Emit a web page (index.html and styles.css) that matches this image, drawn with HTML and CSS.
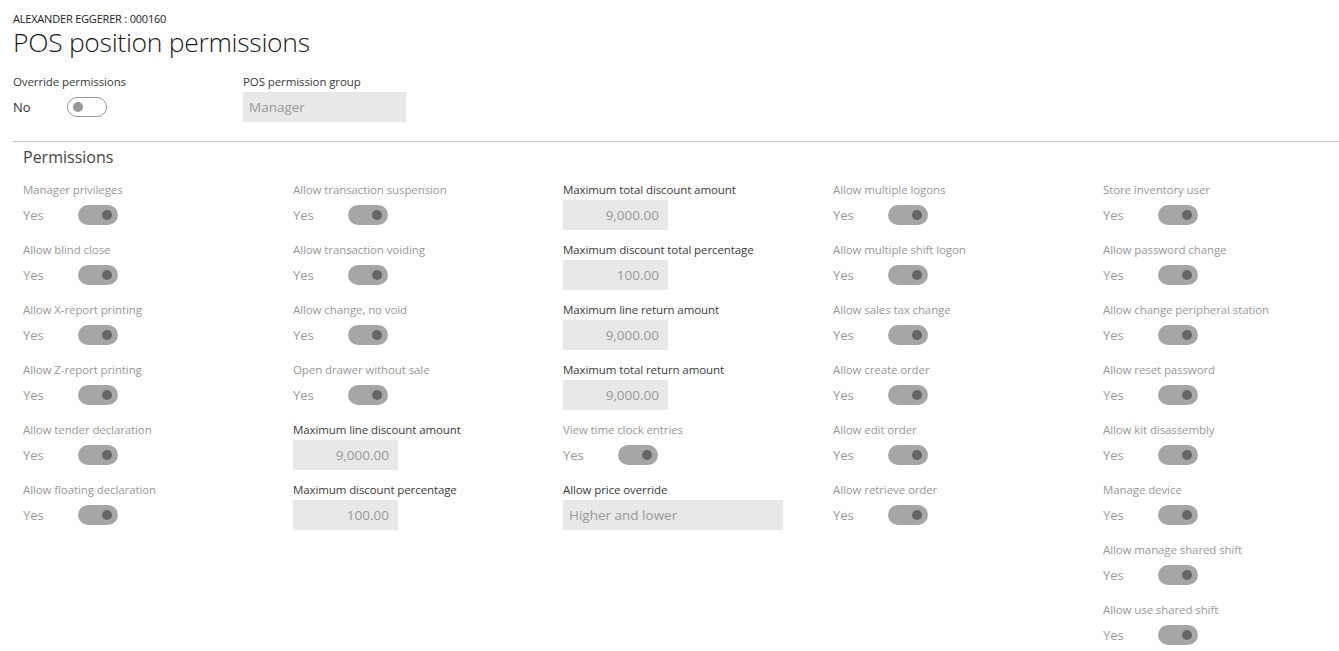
FILE: index.html
```html
<!DOCTYPE html>
<html>
<head>
<meta charset="utf-8">
<link rel="stylesheet" href="styles.css">
</head>
<body>
<div class="page">
  <div class="caption">ALEXANDER EGGERER : 000160</div>
  <h1 class="title">POS position permissions</h1>
  <div class="top-fields">
    <div class="top-field f-override">
      <div class="label dark">Override permissions</div>
      <div class="control">
        <span class="val dark">No</span>
        <span class="toggle off"><span class="knob"></span></span>
      </div>
    </div>
    <div class="top-field">
      <div class="label dark">POS permission group</div>
      <div class="control">
        <div class="input w163 left">Manager</div>
      </div>
    </div>
  </div>
  <div class="section">
    <div class="section-title">Permissions</div>
    <div class="grid">
      <div class="col">
        <div class="field"><div class="label">Manager privileges</div><div class="control"><span class="val">Yes</span><span class="toggle"><span class="knob"></span></span></div></div>
        <div class="field"><div class="label">Allow blind close</div><div class="control"><span class="val">Yes</span><span class="toggle"><span class="knob"></span></span></div></div>
        <div class="field"><div class="label">Allow X-report printing</div><div class="control"><span class="val">Yes</span><span class="toggle"><span class="knob"></span></span></div></div>
        <div class="field"><div class="label">Allow Z-report printing</div><div class="control"><span class="val">Yes</span><span class="toggle"><span class="knob"></span></span></div></div>
        <div class="field"><div class="label">Allow tender declaration</div><div class="control"><span class="val">Yes</span><span class="toggle"><span class="knob"></span></span></div></div>
        <div class="field"><div class="label">Allow floating declaration</div><div class="control"><span class="val">Yes</span><span class="toggle"><span class="knob"></span></span></div></div>
      </div>
      <div class="col">
        <div class="field"><div class="label">Allow transaction suspension</div><div class="control"><span class="val">Yes</span><span class="toggle"><span class="knob"></span></span></div></div>
        <div class="field"><div class="label">Allow transaction voiding</div><div class="control"><span class="val">Yes</span><span class="toggle"><span class="knob"></span></span></div></div>
        <div class="field"><div class="label">Allow change, no void</div><div class="control"><span class="val">Yes</span><span class="toggle"><span class="knob"></span></span></div></div>
        <div class="field"><div class="label">Open drawer without sale</div><div class="control"><span class="val">Yes</span><span class="toggle"><span class="knob"></span></span></div></div>
        <div class="field"><div class="label dark">Maximum line discount amount</div><div class="control"><div class="input num">9,000.00</div></div></div>
        <div class="field"><div class="label dark">Maximum discount percentage</div><div class="control"><div class="input num">100.00</div></div></div>
      </div>
      <div class="col">
        <div class="field"><div class="label dark">Maximum total discount amount</div><div class="control"><div class="input num">9,000.00</div></div></div>
        <div class="field"><div class="label dark">Maximum discount total percentage</div><div class="control"><div class="input num">100.00</div></div></div>
        <div class="field"><div class="label dark">Maximum line return amount</div><div class="control"><div class="input num">9,000.00</div></div></div>
        <div class="field"><div class="label dark">Maximum total return amount</div><div class="control"><div class="input num">9,000.00</div></div></div>
        <div class="field"><div class="label">View time clock entries</div><div class="control"><span class="val">Yes</span><span class="toggle"><span class="knob"></span></span></div></div>
        <div class="field"><div class="label dark">Allow price override</div><div class="control"><div class="input w220 left">Higher and lower</div></div></div>
      </div>
      <div class="col">
        <div class="field"><div class="label">Allow multiple logons</div><div class="control"><span class="val">Yes</span><span class="toggle"><span class="knob"></span></span></div></div>
        <div class="field"><div class="label">Allow multiple shift logon</div><div class="control"><span class="val">Yes</span><span class="toggle"><span class="knob"></span></span></div></div>
        <div class="field"><div class="label">Allow sales tax change</div><div class="control"><span class="val">Yes</span><span class="toggle"><span class="knob"></span></span></div></div>
        <div class="field"><div class="label">Allow create order</div><div class="control"><span class="val">Yes</span><span class="toggle"><span class="knob"></span></span></div></div>
        <div class="field"><div class="label">Allow edit order</div><div class="control"><span class="val">Yes</span><span class="toggle"><span class="knob"></span></span></div></div>
        <div class="field"><div class="label">Allow retrieve order</div><div class="control"><span class="val">Yes</span><span class="toggle"><span class="knob"></span></span></div></div>
      </div>
      <div class="col">
        <div class="field"><div class="label">Store inventory user</div><div class="control"><span class="val">Yes</span><span class="toggle"><span class="knob"></span></span></div></div>
        <div class="field"><div class="label">Allow password change</div><div class="control"><span class="val">Yes</span><span class="toggle"><span class="knob"></span></span></div></div>
        <div class="field"><div class="label">Allow change peripheral station</div><div class="control"><span class="val">Yes</span><span class="toggle"><span class="knob"></span></span></div></div>
        <div class="field"><div class="label">Allow reset password</div><div class="control"><span class="val">Yes</span><span class="toggle"><span class="knob"></span></span></div></div>
        <div class="field"><div class="label">Allow kit disassembly</div><div class="control"><span class="val">Yes</span><span class="toggle"><span class="knob"></span></span></div></div>
        <div class="field"><div class="label">Manage device</div><div class="control"><span class="val">Yes</span><span class="toggle"><span class="knob"></span></span></div></div>
        <div class="field"><div class="label">Allow manage shared shift</div><div class="control"><span class="val">Yes</span><span class="toggle"><span class="knob"></span></span></div></div>
        <div class="field"><div class="label">Allow use shared shift</div><div class="control"><span class="val">Yes</span><span class="toggle"><span class="knob"></span></span></div></div>
      </div>
    </div>
  </div>
</div>
</body>
</html>
```

FILE: styles.css
```css
* { box-sizing: border-box; }
html, body { margin: 0; padding: 0; background: #fff; }
body {
  font-family: "Open Sans", "Noto Sans", sans-serif;
  color: #333;
  overflow: hidden;
}
.page { padding: 12px 0 0 13px; }
.caption {
  font-size: 11px;
  line-height: 14px;
  color: #222;
  letter-spacing: -0.2px;
}
.title {
  margin: 0;
  font-weight: 300;
  font-size: 26.5px;
  line-height: 32px;
  color: #1a1a1a;
  letter-spacing: -0.3px;
}
.top-fields {
  display: flex;
  margin-top: 14px;
}
.top-field { width: 230px; }
.label {
  font-size: 11.5px;
  line-height: 20px;
  height: 20px;
  color: #999;
  white-space: nowrap;
  letter-spacing: -0.1px;
}
.label.dark { color: #3a3a3a; }
.control {
  height: 30px;
  display: flex;
  align-items: center;
}
.val {
  width: 55px;
  font-size: 13px;
  color: #9a9a9a;
}
.val.dark { color: #333; }
.f-override .val { width: 54px; }
.toggle {
  width: 40px;
  height: 20px;
  border-radius: 10px;
  background: #a6a6a6;
  display: flex;
  align-items: center;
  justify-content: flex-end;
  padding: 0 6px;
}
.knob {
  width: 10px;
  height: 10px;
  border-radius: 50%;
  background: #666;
}
.toggle.off {
  background: #fff;
  border: 1px solid #999;
  justify-content: flex-start;
  padding: 0 5px;
}
.toggle.off .knob { background: #999; }
.input {
  height: 30px;
  width: 105px;
  background: #e8e8e8;
  color: #999;
  font-size: 13.5px;
  line-height: 30px;
  padding: 0 9px;
  white-space: nowrap;
}
.input.num { text-align: right; }
.input.left { text-align: left; padding: 0 6px; }
.w163 { width: 163px; }
.w220 { width: 220px; }
.section {
  margin-top: 19px;
  border-top: 1px solid #c8c8c8;
  padding-left: 10px;
}
.section-title {
  font-size: 16px;
  line-height: 26px;
  margin-top: 2px;
  color: #444;
  font-weight: 400;
}
.grid {
  display: grid;
  grid-template-columns: repeat(5, 270px);
  margin-top: 10px;
}
.field { height: 60px; }
```
